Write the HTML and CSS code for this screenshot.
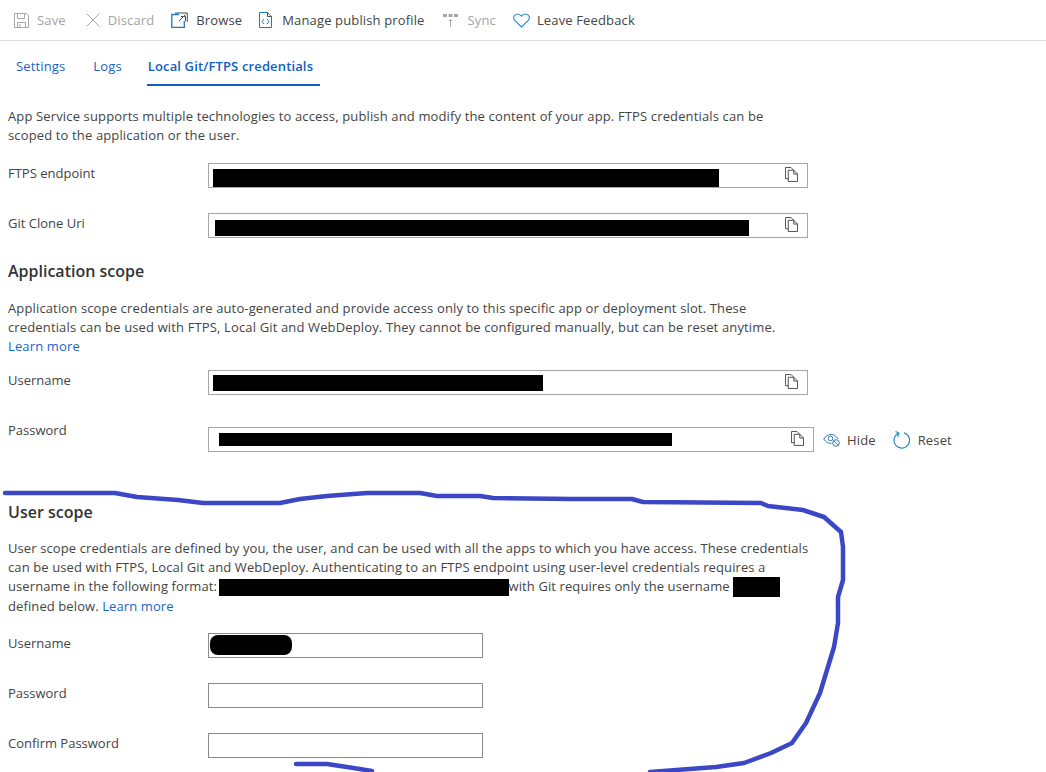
FILE: index.html
```html
<!DOCTYPE html>
<html lang="en">
<head>
<meta charset="utf-8">
<title>Deployment Center</title>
<link rel="stylesheet" href="styles.css">
</head>
<body>
<div class="page">
  <header class="toolbar">
    <div class="tool off tool-save">
      <svg width="15" height="15" viewBox="0 0 15 15" fill="none" stroke="#a6a6a6"><path d="M.5.5h12l2 2v12H.5z"/><path d="M3.500.5v5h7v-5M3.500 14.500v-5h8v5M6 11v3"/></svg>
      <span>Save</span>
    </div>
    <div class="tool off tool-discard">
      <svg width="14" height="14" viewBox="0 0 14 14" fill="none" stroke="#a6a6a6"><path d="M.5.5l13 13M13.500.5l-13 13"/></svg>
      <span>Discard</span>
    </div>
    <div class="tool tool-browse">
      <svg width="17" height="16" viewBox="0 0 17 16" fill="none"><path d="M8 2.500H.8v13h12.500V9" stroke="#1f7ab8" stroke-width="1.300"/><path d="M4 1h12.300v9M14.500 2.500L8 9M10 4.500h4.500V9" stroke="#40505c"/></svg>
      <span>Browse</span>
    </div>
    <div class="tool tool-manage">
      <svg width="13" height="16" viewBox="0 0 13 16" fill="none" stroke="#1f7ab8"><path d="M.5.500h8l4 4v11H.5z"/><path d="M8.500.500v4h4" stroke="#40505c"/><path d="M5 7L3 9.500 5 12M8 7l2 2.500L8 12" stroke-width="1"/></svg>
      <span>Manage publish profile</span>
    </div>
    <div class="tool off tool-sync">
      <svg width="15" height="15" viewBox="0 0 15 15" fill="#a6a6a6"><rect y="1" width="4" height="3"/><rect x="5.500" y="1" width="4" height="3"/><rect x="11" y="1" width="4" height="3"/><rect x="7" y="7" width="1" height="7"/><path d="M5.500 8l2-2 2 2z"/></svg>
      <span>Sync</span>
    </div>
    <div class="tool tool-feedback">
      <svg width="17" height="15" viewBox="0 0 17 15" fill="none" stroke="#2a8ac4" stroke-width="1.100"><path d="M8.500 14L1.700 7.300C-.5 4.800 1 1 4.500 1c1.800 0 3.100.9 4 2.300C9.400 1.900 10.700 1 12.500 1 16 1 17.500 4.800 15.300 7.300z"/></svg>
      <span>Leave Feedback</span>
    </div>
  </header>

  <nav class="tabs">
    <a class="tab tab-settings">Settings</a>
    <a class="tab tab-logs">Logs</a>
    <a class="tab active">Local Git/FTPS credentials</a>
  </nav>

  <main class="content">
    <p class="intro">App Service supports multiple technologies to access, publish and modify the content of your app. FTPS credentials can be<br>scoped to the application or the user.</p>

    <div class="row row-first">
      <label class="label">FTPS endpoint</label>
      <div class="field wide">
        <i class="mask m-ftps"></i>
        <svg class="copy" width="13" height="15" viewBox="0 0 14 16" fill="none" stroke="#444"><path d="M3.500 12.500H.5V.5h6l3 3"/><path d="M3.500 3.500h6l4 4v8h-10z"/><path d="M9.500 3.500v4h4"/></svg>
      </div>
    </div>
    <div class="row">
      <label class="label">Git Clone Uri</label>
      <div class="field wide">
        <i class="mask m-git"></i>
        <svg class="copy" width="13" height="15" viewBox="0 0 14 16" fill="none" stroke="#444"><path d="M3.500 12.500H.5V.5h6l3 3"/><path d="M3.500 3.500h6l4 4v8h-10z"/><path d="M9.500 3.500v4h4"/></svg>
      </div>
    </div>

    <h2 class="heading h-app">Application scope</h2>
    <p class="para">Application scope credentials are auto-generated and provide access only to this specific app or deployment slot. These<br>credentials can be used with FTPS, Local Git and WebDeploy. They cannot be configured manually, but can be reset anytime.<br><a class="link">Learn more</a></p>

    <div class="row row-after">
      <label class="label">Username</label>
      <div class="field wide">
        <i class="mask m-user"></i>
        <svg class="copy" width="13" height="15" viewBox="0 0 14 16" fill="none" stroke="#444"><path d="M3.500 12.500H.5V.5h6l3 3"/><path d="M3.500 3.500h6l4 4v8h-10z"/><path d="M9.500 3.500v4h4"/></svg>
      </div>
    </div>
    <div class="row row-pass">
      <label class="label">Password</label>
      <div class="field wider">
        <i class="mask m-pass"></i>
        <svg class="copy" width="13" height="15" viewBox="0 0 14 16" fill="none" stroke="#444"><path d="M3.500 12.500H.5V.5h6l3 3"/><path d="M3.500 3.500h6l4 4v8h-10z"/><path d="M9.500 3.500v4h4"/></svg>
      </div>
      <div class="action act-hide">
        <svg width="17" height="14" viewBox="0 0 17 14" fill="none" stroke="#2a7fbb"><path d="M.7 6C3 2.800 5.500 1.500 8 1.500s5 1.300 7.300 4.500"/><path d="M.7 6C3 9.200 5.500 10.500 8.500 10.500"/><circle cx="7.500" cy="5.500" r="2.300"/><circle cx="13" cy="10" r="3.300" fill="#fff"/><path d="M10.800 7.800l4.400 4.400"/></svg>
        <span>Hide</span>
      </div>
      <div class="action act-reset">
        <svg width="18" height="18" viewBox="0 0 18 18" fill="none" stroke="#2a8ac4" stroke-width="1.200"><path d="M6.500 2.200A7.800 7.800 0 1 0 12 1.800"/><path d="M3.500.5l3.500 1.800-1.500 3.500"/></svg>
        <span>Reset</span>
      </div>
    </div>

    <h2 class="heading h-user">User scope</h2>
    <p class="para para-user">User scope credentials are defined by you, the user, and can be used with all the apps to which you have access. These credentials<br>can be used with FTPS, Local Git and WebDeploy. Authenticating to an FTPS endpoint using user-level credentials requires a<br>username in the following format: <i class="ink ink-a"></i>with Git requires only the username <i class="ink ink-b"></i><br>defined below. <a class="link">Learn more</a></p>

    <div class="row row-user">
      <label class="label">Username</label>
      <div class="field short"><i class="mask m-pill"></i></div>
    </div>
    <div class="row">
      <label class="label">Password</label>
      <div class="field short"></div>
    </div>
    <div class="row">
      <label class="label">Confirm Password</label>
      <div class="field short"></div>
    </div>
  </main>

  <svg class="scribble" width="1046" height="772" viewBox="0 0 1046 772" fill="none" stroke="#3b47c6" stroke-width="4.500" stroke-linejoin="round" stroke-linecap="round">
    <path d="M5 493L115 493 137 497 178 500 203 503 280 503 300 499 327 496 367 493 420 493 437 496 480 496 493 498 573 499 632 499 643 502 761 503 768 506 803 510 824 517 841 532 843 547 843 580 838 597 838 623 834 647 827 670 820 693 806 723 792 743 771 753 744 763 716 767 650 772"/>
    <path d="M296 764L327 764 347 767 372 771"/>
  </svg>
</div>
</body>
</html>
```
FILE: styles.css
```css
* { box-sizing: border-box; }
html, body { margin: 0; padding: 0; background: #fff; }
body {
  font-family: "Open Sans", "Noto Sans", "Liberation Sans", sans-serif;
  font-size: 13px;
  letter-spacing: 0.14px;
  color: #444;
}
.page { position: relative; width: 1046px; height: 772px; overflow: hidden; }

.toolbar {
  display: flex;
  align-items: center;
  height: 41px;
  border-bottom: 1px solid #ddd;
  padding-left: 14px;
}
.tool { display: flex; align-items: center; gap: 8px; color: #444; white-space: nowrap; }
.tool svg { flex: none; }
.tool.off { color: #a3a3a3; }
.tool-discard { margin-left: 20px; }
.tool-browse { margin-left: 17px; }
.tool-manage { margin-left: 17px; gap: 10px; }
.tool-sync { margin-left: 18px; gap: 10px; }
.tool-feedback { margin-left: 17px; gap: 7px; }

.tabs { display: flex; height: 45px; padding-left: 16px; }
.tab {
  display: block;
  padding-top: 16px;
  color: #1a63c9;
  line-height: 18px;
  white-space: nowrap;
}
.tab-settings { margin-right: 28px; }
.tab-logs { margin-right: 25px; }
.tab.active {
  font-weight: 600;
  color: #0f5ec2;
  border-bottom: 2px solid #0f5ec2;
  height: 45px;
  padding-left: 1px;
  padding-right: 7px;
}

.content { padding: 0 8px; }
.intro, .para { margin: 0; line-height: 19px; white-space: nowrap; }
.intro { margin-top: 21px; }
.para-user { letter-spacing: 0.1px; }
.row { display: flex; align-items: flex-start; height: 25px; margin-bottom: 25px; }
.row-first { margin-top: 18px; }
.row-after { margin-top: 14px; }
.row-user { margin-top: 17px; }
.row-pass { height: 32px; align-items: flex-end; }
.row-pass .label { align-self: flex-start; }
.label { width: 200px; flex: none; line-height: 19px; padding-top: 1px; letter-spacing: 0; }

.field { position: relative; height: 25px; border: 1px solid #a6a6a6; background: #fff; flex: none; }
.wide { width: 600px; }
.wider { width: 606px; }
.short { width: 275px; border-color: #8a8a8a; }

.mask { position: absolute; background: #000; display: block; }
.m-ftps { left: 4px; top: 5px; width: 506px; height: 18px; }
.m-git { left: 6px; top: 6px; width: 534px; height: 16px; }
.m-user { left: 4px; top: 4px; width: 330px; height: 16px; }
.m-pass { left: 10px; top: 5px; width: 453px; height: 13px; }
.m-pill { left: 1px; top: 1px; width: 82px; height: 20px; border-radius: 8px; }
.copy { position: absolute; right: 9px; top: 3px; }

.heading { margin: 0; font-size: 16px; font-weight: 600; color: #333; line-height: 20px; letter-spacing: 0; }
.h-app { margin-top: -2px; }
.h-user { margin-top: 50px; }
.h-app + .para { margin-top: 18px; }
.h-user + .para { margin-top: 17px; }
.link { color: #1a63c9; }
.ink { display: inline-block; background: #000; vertical-align: top; }
.ink-a { width: 290px; height: 17px; margin-top: 2px; margin-left: -2px; }
.ink-b { width: 47px; height: 20px; }

.action { display: flex; align-items: center; gap: 7px; height: 25px; }
.act-hide { margin-left: 9px; }
.act-reset { margin-left: 16px; gap: 8px; }

.scribble { position: absolute; left: 0; top: 0; pointer-events: none; }
```
